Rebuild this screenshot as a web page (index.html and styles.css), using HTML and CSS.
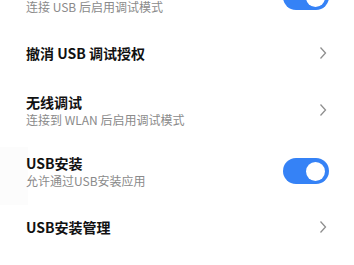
FILE: index.html
```html
<!DOCTYPE html>
<html lang="zh-CN">
<head>
<meta charset="utf-8">
<link rel="stylesheet" href="styles.css">
</head>
<body>
<div class="list">
  <div class="row double">
    <div class="text">
      <div class="title">USB调试</div>
      <div class="sub">连接 USB 后启用调试模式</div>
    </div>
    <div class="toggle"><span class="knob"></span></div>
  </div>
  <div class="row single">
    <div class="text">
      <div class="title">撤消 USB 调试授权</div>
    </div>
    <svg class="chev" width="8" height="14" viewBox="0 0 8 14"><polyline points="1.5,1.5 6.5,7 1.5,12.5" fill="none" stroke="#8f8f8f" stroke-width="1.3"/></svg>
  </div>
  <div class="row double">
    <div class="text">
      <div class="title">无线调试</div>
      <div class="sub">连接到 WLAN 后启用调试模式</div>
    </div>
    <svg class="chev" width="8" height="14" viewBox="0 0 8 14"><polyline points="1.5,1.5 6.5,7 1.5,12.5" fill="none" stroke="#8f8f8f" stroke-width="1.3"/></svg>
  </div>
  <div class="row double">
    <div class="text">
      <div class="title">USB安装</div>
      <div class="sub">允许通过USB安装应用</div>
    </div>
    <div class="toggle"><span class="knob"></span></div>
  </div>
  <div class="row single">
    <div class="text">
      <div class="title">USB安装管理</div>
    </div>
    <svg class="chev" width="8" height="14" viewBox="0 0 8 14"><polyline points="1.5,1.5 6.5,7 1.5,12.5" fill="none" stroke="#8f8f8f" stroke-width="1.3"/></svg>
  </div>
</div>
<div class="ghost"></div>
</body>
</html>
```
FILE: styles.css
```css
html, body {
  margin: 0;
  padding: 0;
  background: #ffffff;
  width: 354px;
  height: 265px;
  overflow: hidden;
  font-family: "Noto Sans CJK SC", "Noto Sans", sans-serif;
}
body { position: relative; }
.list {
  margin-top: -34px;
  display: flex;
  flex-direction: column;
}
.row {
  display: flex;
  align-items: center;
  justify-content: space-between;
  padding: 0 26px 0 26px;
  box-sizing: border-box;
}
.row.single { height: 52px; }
.row.double { height: 61px; padding-top: 1px; }
.text { display: flex; flex-direction: column; }
.title {
  font-size: 14px;
  line-height: 18px;
  font-weight: 600;
  color: #111111;
}
.sub {
  margin-top: 1px;
  font-size: 12px;
  line-height: 16px;
  color: #8a8a8a;
}
.chev { margin-right: 1px; }
.toggle {
  width: 46px;
  height: 26px;
  border-radius: 13px;
  background: #3582f6;
  display: flex;
  align-items: center;
  justify-content: flex-end;
  padding: 0 4px;
  box-sizing: border-box;
  margin-right: -1px;
}
.knob {
  width: 19px;
  height: 19px;
  border-radius: 50%;
  background: #ffffff;
}
.ghost {
  position: absolute;
  left: 0;
  top: 147px;
  width: 28px;
  height: 58px;
  background: rgba(0,0,0,0.012);
}
```
